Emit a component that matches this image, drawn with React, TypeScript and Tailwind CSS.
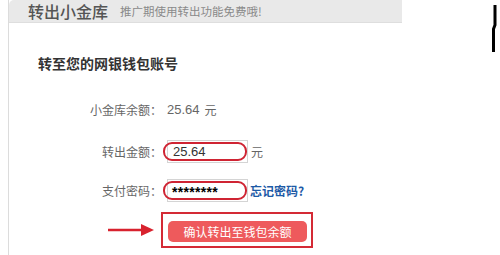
import React from "react";

const cjk = { fontFamily: '"Noto Sans CJK SC", "Liberation Sans", sans-serif' };
const latin = { fontFamily: '"Liberation Sans", "Noto Sans CJK SC", sans-serif' };

function Arrow() {
  return (
    <svg width="46" height="14" viewBox="0 0 46 14" className="shrink-0">
      <line x1="0" y1="7" x2="36" y2="7" stroke="#d8222e" strokeWidth="2.5" />
      <polygon points="33,1 46,7 33,13" fill="#d8222e" />
    </svg>
  );
}

export default function App() {
  return (
    <div className="w-[500px] h-[255px] bg-white overflow-hidden flex" style={cjk}>
      <div className="w-[8px] shrink-0" />
      <div className="w-[394px] h-full border-l border-[#dcdcdc] flex flex-col">
        <div className="h-[23px] bg-[#e9e9e9] border-b border-[#dedede] rounded-tl-[5px] flex items-center pl-[19px]">
          <span className="text-[16px] leading-[18px] text-[#555] font-medium">转出小金库</span>
          <span className="ml-[12px] text-[11.5px] leading-[14px] text-[#8a8a8a]">推广期使用转出功能免费哦!</span>
        </div>

        <div className="mt-[32px] pl-[29px] text-[14px] leading-[16px] font-bold text-[#333]">转至您的网银钱包账号</div>

        <div className="mt-[31px] flex items-center h-[16px] text-[12px] text-[#666]">
          <div className="w-[153px] text-right">小金库余额：</div>
          <div className="ml-[5px] text-[13px]" style={latin}>25.64</div>
          <div className="ml-[5px]">元</div>
        </div>

        <div className="mt-[22px] flex items-center h-[23px] text-[12px] text-[#666]">
          <div className="w-[153px] text-right">转出金额：</div>
          <div className="ml-[1px] relative w-[85px] h-[23px]">
            <div className="absolute left-[4px] top-0 w-[81px] h-[23px] border border-[#d4d4d4] bg-white flex items-center pl-[5px] text-[13px] text-[#333]" style={latin}>
              25.64
            </div>
            <div className="absolute left-0 top-[2px] w-[84px] h-[19px] border-2 border-[#cf2433] rounded-[9px]" />
          </div>
          <div className="ml-[3px]">元</div>
        </div>

        <div className="mt-[16px] flex items-center h-[23px] text-[12px] text-[#666]">
          <div className="w-[153px] text-right">支付密码：</div>
          <div className="ml-[1px] relative w-[85px] h-[23px]">
            <div className="absolute left-[4px] top-0 w-[81px] h-[23px] border border-[#d4d4d4] bg-white flex items-center pl-[4px] pt-[3px] text-[14px] font-bold text-black tracking-[0.3px]" style={latin}>
              ********
            </div>
            <div className="absolute left-0 top-[2px] w-[84px] h-[19px] border-2 border-[#cf2433] rounded-[9px]" />
          </div>
          <div className="ml-[2px] text-[12px] font-bold text-[#1d5aa6]">忘记密码?</div>
        </div>

        <div className="mt-[10px] flex items-center h-[36px]">
          <div className="w-[99px] shrink-0" />
          <Arrow />
          <div className="ml-[7px] w-[152px] h-[36px] border-2 border-[#d42a35] pl-[5px] pt-[7px]">
            <div className="w-[139px] h-[21px] bg-[#ee5a5c] rounded-[5px] flex items-center justify-center text-white text-[12px]">
              确认转出至钱包余额
            </div>
          </div>
        </div>
      </div>
      <div className="ml-auto mr-[2px] shrink-0">
        <svg width="8" height="60" viewBox="0 0 8 60">
          <path d="M5 5 L5 25 L3.5 29 L3.5 52" stroke="#000" strokeWidth="3" fill="none" />
        </svg>
      </div>
    </div>
  );
}
